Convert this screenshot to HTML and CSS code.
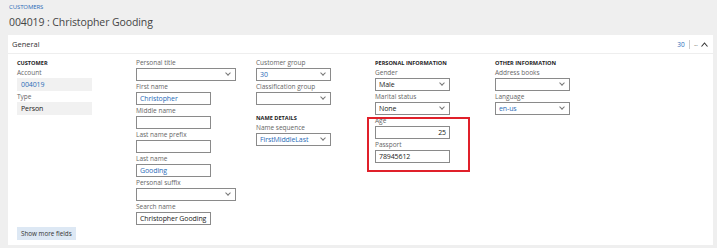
FILE: index.html
```html
<!DOCTYPE html>
<html lang="en">
<head>
  <meta charset="UTF-8">
  <title>004019 : Christopher Gooding</title>
  <link rel="stylesheet" href="styles.css">
</head>
<body>

<header class="page-head">
  <div class="crumb">CUSTOMERS</div>
  <h1>004019 : Christopher Gooding</h1>
</header>

<section class="panel">
  <div class="panel-head">
    <span class="panel-title">General</span>
    <div class="panel-tools">
      <span class="summary">30</span>
      <span class="sep"></span>
      <span class="dots">&middot;&middot;&middot;</span>
      <svg class="caret" width="7" height="5" viewBox="0 0 7 5"><path d="M0.5 4.5 L3.5 1 L6.5 4.5" fill="none" stroke="#333" stroke-width="1.1"/></svg>
    </div>
  </div>

  <div class="columns">
    <div class="col">
      <div class="group">CUSTOMER</div>
      <div class="field">
        <label>Account</label>
        <div class="readonly link">004019</div>
      </div>
      <div class="field">
        <label>Type</label>
        <div class="readonly">Person</div>
      </div>
    </div>

    <div class="col">
      <div class="field">
        <label>Personal title</label>
        <div class="input select wide"></div>
      </div>
      <div class="field">
        <label>First name</label>
        <div class="input link">Christopher</div>
      </div>
      <div class="field">
        <label>Middle name</label>
        <div class="input"></div>
      </div>
      <div class="field">
        <label>Last name prefix</label>
        <div class="input"></div>
      </div>
      <div class="field">
        <label>Last name</label>
        <div class="input link">Gooding</div>
      </div>
      <div class="field">
        <label>Personal suffix</label>
        <div class="input select wide"></div>
      </div>
      <div class="field">
        <label>Search name</label>
        <div class="input">Christopher Gooding</div>
      </div>
    </div>

    <div class="col">
      <div class="field">
        <label>Customer group</label>
        <div class="input select link">30</div>
      </div>
      <div class="field">
        <label>Classification group</label>
        <div class="input select"></div>
      </div>
      <div class="group spaced">NAME DETAILS</div>
      <div class="field">
        <label>Name sequence</label>
        <div class="input select link">FirstMiddleLast</div>
      </div>
    </div>

    <div class="col">
      <div class="group">PERSONAL INFORMATION</div>
      <div class="field">
        <label>Gender</label>
        <div class="input select">Male</div>
      </div>
      <div class="field">
        <label>Marital status</label>
        <div class="input select">None</div>
      </div>
      <div class="field">
        <label>Age</label>
        <div class="input num">25</div>
      </div>
      <div class="field">
        <label>Passport</label>
        <div class="input">78945612</div>
      </div>
      <div class="highlight"></div>
    </div>

    <div class="col">
      <div class="group">OTHER INFORMATION</div>
      <div class="field">
        <label>Address books</label>
        <div class="input select"></div>
      </div>
      <div class="field">
        <label>Language</label>
        <div class="input select link">en-us</div>
      </div>
    </div>
  </div>

  <button class="more">Show more fields</button>
</section>

</body>
</html>
```

FILE: styles.css
```css
body {
  margin: 0;
  font-family: "Open Sans", "Noto Sans", sans-serif;
  background-color: #efefef;
  color: #222;
  width: 717px;
  height: 248px;
  overflow: hidden;
}

.page-head {
  padding: 3px 9px 0;
  height: 32px;
}

.crumb {
  font-size: 6px;
  line-height: 8px;
  color: #2b6cb8;
  letter-spacing: -0.1px;
}

.page-head h1 {
  margin: 2px 0 0;
  font-size: 10.5px;
  line-height: 18px;
  font-weight: 400;
  color: #444;
  letter-spacing: -0.1px;
}

.panel {
  margin: 0 4px 0 8px;
  background-color: white;
  height: 210px;
  position: relative;
}

.panel-head {
  height: 18px;
  display: flex;
  align-items: center;
  justify-content: space-between;
  padding: 0 5px 0 4px;
  border-bottom: 1px solid #eee;
}

.panel-title {
  font-size: 7.5px;
  color: #333;
}

.panel-tools {
  display: flex;
  align-items: center;
  gap: 4px;
  font-size: 6.5px;
}

.summary {
  color: #2b6cb8;
}

.sep {
  width: 1px;
  height: 9px;
  background-color: #ccc;
}

.dots {
  color: #888;
  font-size: 8px;
  letter-spacing: -1px;
}

.columns {
  display: grid;
  grid-template-columns: 119px 120px 119px 120px 120px;
  padding: 4px 0 0 9px;
}

.col {
  position: relative;
}

.group {
  font-size: 5.6px;
  line-height: 10px;
  font-weight: 700;
  color: #222;
}

.group.spaced {
  margin-top: 8px;
}

.field {
  margin-bottom: 1px;
}

.field label {
  display: block;
  font-size: 6.5px;
  line-height: 10px;
  color: #666;
}

.input,
.readonly {
  box-sizing: border-box;
  width: 75px;
  height: 13px;
  font-size: 7px;
  line-height: 11px;
  padding: 0 3px;
  color: #222;
  white-space: nowrap;
  letter-spacing: -0.1px;
}

.input {
  border: 1px solid #8a8a8a;
  position: relative;
}

.readonly {
  background-color: #f1f1f1;
  line-height: 13px;
  padding-left: 4px;
}

.input.wide {
  width: 100px;
}

.input.num {
  text-align: right;
}

.link {
  color: #2b6cb8;
}

.select::after {
  content: "";
  position: absolute;
  right: 5px;
  top: 2px;
  width: 3px;
  height: 3px;
  border-right: 1px solid #777;
  border-bottom: 1px solid #777;
  transform: rotate(45deg);
}

.highlight {
  position: absolute;
  left: -8px;
  top: 59px;
  width: 103px;
  height: 55px;
  box-sizing: border-box;
  border: 2px solid #e0202a;
}

.more {
  position: absolute;
  left: 9px;
  bottom: 5px;
  height: 13px;
  padding: 0 4px;
  border: none;
  background-color: #dde8f4;
  font-family: inherit;
  font-size: 6.3px;
  color: #333;
}
```
